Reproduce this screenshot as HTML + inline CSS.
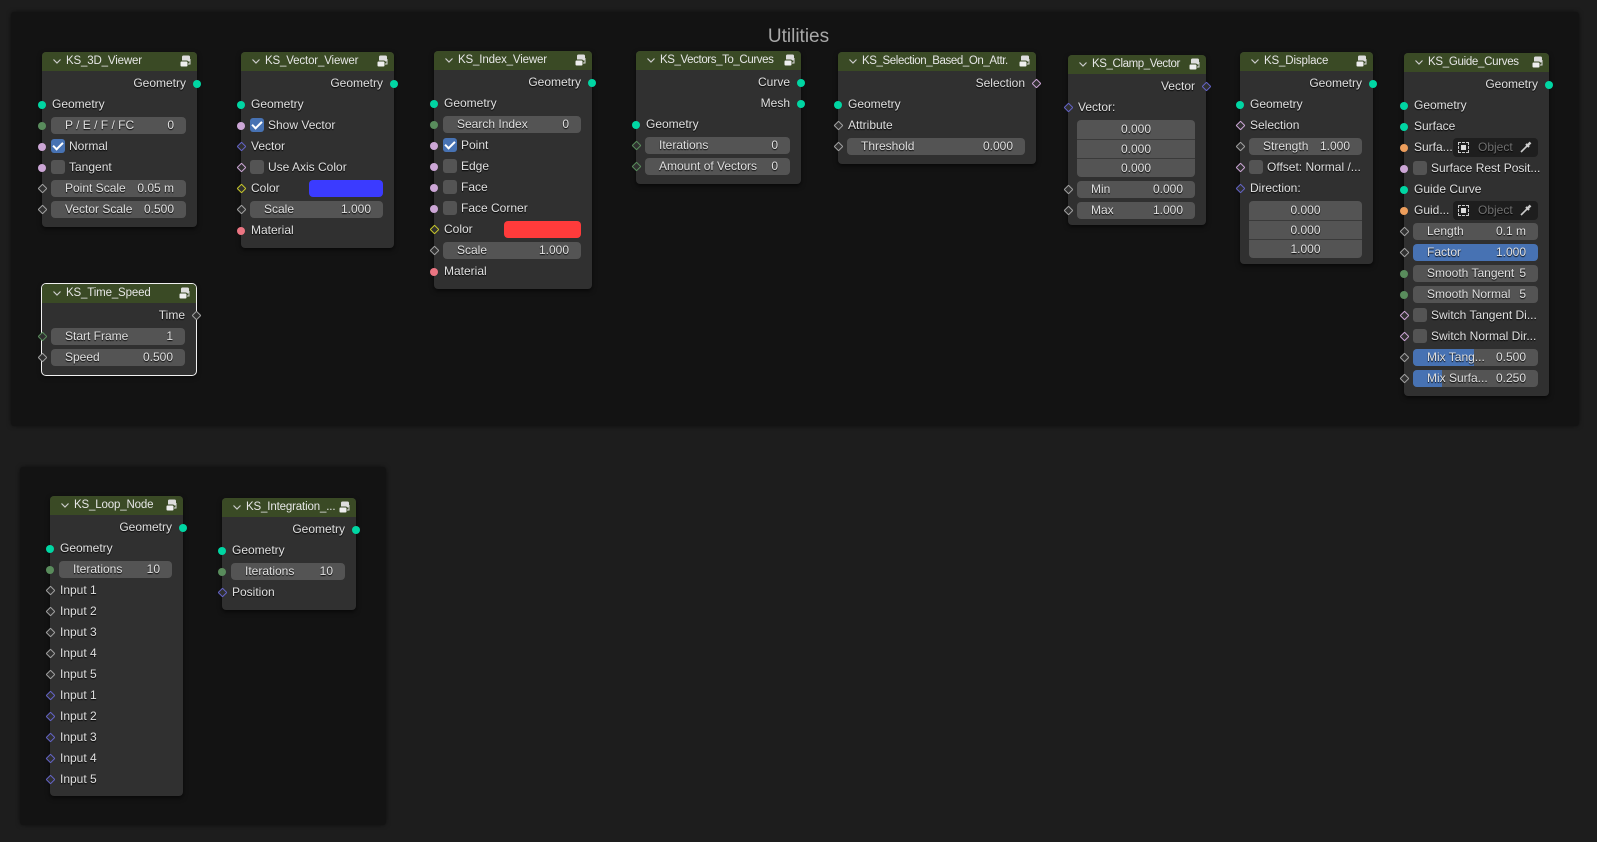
<!DOCTYPE html>
<html><head><meta charset="utf-8"><style>
*{box-sizing:border-box;margin:0;padding:0}
body{width:1597px;height:842px;background:#1d1d1d;font-family:"Liberation Sans",sans-serif;overflow:hidden;position:relative}
.fr{position:absolute;background:#131313;border-radius:3px;box-shadow:0 0 4px rgba(0,0,0,.5)}
.ttl{position:absolute;left:0;width:1597px;top:26px;text-align:center;color:#a8a8a8;font-size:19px}
.n{position:absolute;background:#303030;border-radius:4px;box-shadow:0 2px 5px rgba(0,0,0,.6)}
.n.sel{outline:1.5px solid #f0f0f0}
.h{height:19px;background:#3a4a25;border-radius:4px 4px 0 0;color:#e6e6e6;font-size:11.5px;letter-spacing:-0.15px;line-height:19px;padding-left:24px;padding-right:19px;position:relative;white-space:nowrap;overflow:hidden}
.h .cv{position:absolute;left:11px;top:7px}
.h .ic{position:absolute;right:5px;top:3px}
.b{padding:2px 0 7px}
.r{height:21px;position:relative;line-height:21px;font-size:12px;color:#e0e0e0;white-space:nowrap;text-shadow:0 1px 1px #000}
.o{text-align:right;padding-right:11px}
.i{padding-left:10px}
.s{position:absolute;width:8px;height:8px;border-radius:50%;top:6.5px;left:-4px}
.R{left:auto;right:-4px}
.d{width:7px;height:7px;border-radius:1px;transform:rotate(45deg);top:7px;left:-3.5px;border:1.6px solid #a1a1a1;background:#303030}
.d.R{left:auto;right:-3.5px}
.f{position:absolute;left:9px;right:11px;top:2px;height:17px;background:#545454;border-radius:4px;line-height:17px;overflow:hidden}
.f .l{position:absolute;left:14px}
.f .v{position:absolute;right:12px}
.f .fill{position:absolute;left:0;top:0;bottom:0;background:#4772b3}
.c{position:absolute;left:9px;top:3px;width:14px;height:14px;background:#545454;border-radius:3px}
.c.on{background:#4772b3}
.c.on:after{content:"";position:absolute;left:4px;top:1px;width:4px;height:8px;border:solid #fff;border-width:0 2px 2px 0;transform:rotate(45deg)}
.cl{padding-left:27px}
.sw{position:absolute;top:2px;height:17px;border-radius:4px;right:11px}
.vb{position:relative;margin:2px 11px 2px 9px;background:#545454;border-radius:4px;overflow:hidden}
.vb div{height:19px;line-height:19px;text-align:center;font-size:12px;color:#e0e0e0;border-top:1px solid #3a3a3a;text-shadow:0 1px 1px #000}
.vb div:first-child{border-top:0}
.ob{position:absolute;top:1px;height:19px;right:11px;background:#1e1e1e;border-radius:4px;color:#707070;line-height:19px}
.ob .oi{position:absolute;left:5px;top:4px;width:11px;height:11px;border:1px dashed #ccc}
.ob .oi:after{content:"";position:absolute;left:2px;top:2px;width:5px;height:5px;background:#ddd}
.ob .ot{position:absolute;left:25px}
.ob .ep{position:absolute;right:6px;top:3px}
.G{background:#00d6a3}.I{background:#598c5c}.B{background:#cca6d6}.M{background:#eb7582}.O{background:#ed9e5c}
.dB{border-color:#cca6d6}.dV{border-color:#6363c7}.dI{border-color:#598c5c}.dC{border-color:#c7c729}
</style></head><body>
<svg width="0" height="0" style="position:absolute"><defs>
<symbol id="cv" viewBox="0 0 8 5"><polyline points="0.5,0.5 4,4 7.5,0.5" fill="none" stroke="#ccc" stroke-width="1.2"/></symbol>
<symbol id="ic" viewBox="0 0 13 13"><rect x="3" y="0.5" width="8" height="6" rx="1.5" fill="#ddd"/><rect x="1" y="6" width="8" height="6" rx="1.5" fill="#eee" stroke="#3a4a25" stroke-width="1"/><path d="M11 4 v5 h-2" fill="none" stroke="#ddd" stroke-width="1"/></symbol>
</defs></svg>

<div class="fr" style="left:11px;top:12px;width:1568px;height:414px"></div>
<div class="ttl">Utilities</div>
<div class="fr" style="left:20px;top:467px;width:366px;height:358px"></div>

<div class="n" style="left:42px;top:52px;width:155px">
<div class="h"><svg class="cv" width="8" height="5"><use href="#cv"/></svg>KS_3D_Viewer<svg class="ic" width="13" height="13"><use href="#ic"/></svg></div>
<div class="b">
<div class="r o">Geometry<span class="s R G"></span></div>
<div class="r i"><span class="s G"></span>Geometry</div>
<div class="r"><span class="s I"></span><div class="f"><span class="l">P / E / F / FC</span><span class="v">0</span></div></div>
<div class="r cl"><span class="s B"></span><span class="c on"></span>Normal</div>
<div class="r cl"><span class="s B"></span><span class="c"></span>Tangent</div>
<div class="r"><span class="s d"></span><div class="f"><span class="l">Point Scale</span><span class="v">0.05 m</span></div></div>
<div class="r"><span class="s d"></span><div class="f"><span class="l">Vector Scale</span><span class="v">0.500</span></div></div>
</div></div>

<div class="n" style="left:241px;top:52px;width:153px">
<div class="h"><svg class="cv" width="8" height="5"><use href="#cv"/></svg>KS_Vector_Viewer<svg class="ic" width="13" height="13"><use href="#ic"/></svg></div>
<div class="b">
<div class="r o">Geometry<span class="s R G"></span></div>
<div class="r i"><span class="s G"></span>Geometry</div>
<div class="r cl"><span class="s B"></span><span class="c on"></span>Show Vector</div>
<div class="r i"><span class="s d dV"></span>Vector</div>
<div class="r cl"><span class="s d dB"></span><span class="c"></span>Use Axis Color</div>
<div class="r i"><span class="s d dC"></span>Color<span class="sw" style="left:68px;background:#3b3bff"></span></div>
<div class="r"><span class="s d"></span><div class="f"><span class="l">Scale</span><span class="v">1.000</span></div></div>
<div class="r i"><span class="s M"></span>Material</div>
</div></div>

<div class="n" style="left:434px;top:51px;width:158px">
<div class="h"><svg class="cv" width="8" height="5"><use href="#cv"/></svg>KS_Index_Viewer<svg class="ic" width="13" height="13"><use href="#ic"/></svg></div>
<div class="b">
<div class="r o">Geometry<span class="s R G"></span></div>
<div class="r i"><span class="s G"></span>Geometry</div>
<div class="r"><span class="s I"></span><div class="f"><span class="l">Search Index</span><span class="v">0</span></div></div>
<div class="r cl"><span class="s B"></span><span class="c on"></span>Point</div>
<div class="r cl"><span class="s B"></span><span class="c"></span>Edge</div>
<div class="r cl"><span class="s B"></span><span class="c"></span>Face</div>
<div class="r cl"><span class="s B"></span><span class="c"></span>Face Corner</div>
<div class="r i"><span class="s d dC"></span>Color<span class="sw" style="left:70px;background:#ff3b3b"></span></div>
<div class="r"><span class="s d"></span><div class="f"><span class="l">Scale</span><span class="v">1.000</span></div></div>
<div class="r i"><span class="s M"></span>Material</div>
</div></div>

<div class="n" style="left:636px;top:51px;width:165px">
<div class="h" style="letter-spacing:-0.4px"><svg class="cv" width="8" height="5"><use href="#cv"/></svg>KS_Vectors_To_Curves<svg class="ic" width="13" height="13"><use href="#ic"/></svg></div>
<div class="b">
<div class="r o">Curve<span class="s R G"></span></div>
<div class="r o">Mesh<span class="s R G"></span></div>
<div class="r i"><span class="s G"></span>Geometry</div>
<div class="r"><span class="s d dI"></span><div class="f"><span class="l">Iterations</span><span class="v">0</span></div></div>
<div class="r"><span class="s d dI"></span><div class="f"><span class="l">Amount of Vectors</span><span class="v">0</span></div></div>
</div></div>

<div class="n" style="left:838px;top:52px;width:198px">
<div class="h" style="letter-spacing:-0.4px"><svg class="cv" width="8" height="5"><use href="#cv"/></svg>KS_Selection_Based_On_Attr.<svg class="ic" width="13" height="13"><use href="#ic"/></svg></div>
<div class="b">
<div class="r o">Selection<span class="s d R dB"></span></div>
<div class="r i"><span class="s G"></span>Geometry</div>
<div class="r i"><span class="s d"></span>Attribute</div>
<div class="r"><span class="s d"></span><div class="f"><span class="l">Threshold</span><span class="v">0.000</span></div></div>
</div></div>

<div class="n" style="left:1068px;top:55px;width:138px">
<div class="h" style="letter-spacing:-0.4px"><svg class="cv" width="8" height="5"><use href="#cv"/></svg>KS_Clamp_Vector<svg class="ic" width="13" height="13"><use href="#ic"/></svg></div>
<div class="b" style="padding-bottom:4px">
<div class="r o">Vector<span class="s d R dV"></span></div>
<div class="r i"><span class="s d dV"></span>Vector:</div>
<div class="vb"><div>0.000</div><div>0.000</div><div>0.000</div></div>
<div class="r"><span class="s d"></span><div class="f"><span class="l">Min</span><span class="v">0.000</span></div></div>
<div class="r"><span class="s d"></span><div class="f"><span class="l">Max</span><span class="v">1.000</span></div></div>
</div></div>

<div class="n" style="left:1240px;top:52px;width:133px">
<div class="h"><svg class="cv" width="8" height="5"><use href="#cv"/></svg>KS_Displace<svg class="ic" width="13" height="13"><use href="#ic"/></svg></div>
<div class="b" style="padding-bottom:4px">
<div class="r o">Geometry<span class="s R G"></span></div>
<div class="r i"><span class="s G"></span>Geometry</div>
<div class="r i"><span class="s d dB"></span>Selection</div>
<div class="r"><span class="s d"></span><div class="f"><span class="l">Strength</span><span class="v">1.000</span></div></div>
<div class="r cl"><span class="s d dB"></span><span class="c"></span>Offset: Normal /...</div>
<div class="r i"><span class="s d dV"></span>Direction:</div>
<div class="vb"><div>0.000</div><div>0.000</div><div>1.000</div></div>
</div></div>

<div class="n" style="left:1404px;top:53px;width:145px">
<div class="h" style="letter-spacing:-0.3px"><svg class="cv" width="8" height="5"><use href="#cv"/></svg>KS_Guide_Curves<svg class="ic" width="13" height="13"><use href="#ic"/></svg></div>
<div class="b">
<div class="r o">Geometry<span class="s R G"></span></div>
<div class="r i"><span class="s G"></span>Geometry</div>
<div class="r i"><span class="s G"></span>Surface</div>
<div class="r i"><span class="s O"></span>Surfa...<span class="ob" style="left:49px"><span class="oi"></span><span class="ot">Object</span><svg class="ep" width="12" height="12" viewBox="0 0 12 12"><path d="M1 11 L7 5" stroke="#ccc" stroke-width="1.6"/><path d="M6 3 L9 6" stroke="#ccc" stroke-width="2"/><path d="M8 4 L10.5 1.5" stroke="#ccc" stroke-width="2.5"/></svg></span></div>
<div class="r cl"><span class="s B"></span><span class="c"></span>Surface Rest Posit...</div>
<div class="r i"><span class="s G"></span>Guide Curve</div>
<div class="r i"><span class="s O"></span>Guid...<span class="ob" style="left:49px"><span class="oi"></span><span class="ot">Object</span><svg class="ep" width="12" height="12" viewBox="0 0 12 12"><path d="M1 11 L7 5" stroke="#ccc" stroke-width="1.6"/><path d="M6 3 L9 6" stroke="#ccc" stroke-width="2"/><path d="M8 4 L10.5 1.5" stroke="#ccc" stroke-width="2.5"/></svg></span></div>
<div class="r"><span class="s d"></span><div class="f"><span class="l">Length</span><span class="v">0.1 m</span></div></div>
<div class="r"><span class="s d"></span><div class="f" style="background:#4772b3"><span class="l">Factor</span><span class="v">1.000</span></div></div>
<div class="r"><span class="s I"></span><div class="f"><span class="l">Smooth Tangent</span><span class="v">5</span></div></div>
<div class="r"><span class="s I"></span><div class="f"><span class="l">Smooth Normal</span><span class="v">5</span></div></div>
<div class="r cl"><span class="s d dB"></span><span class="c"></span>Switch Tangent Di...</div>
<div class="r cl"><span class="s d dB"></span><span class="c"></span>Switch Normal Dir...</div>
<div class="r"><span class="s d"></span><div class="f"><span class="fill" style="width:61px"></span><span class="l">Mix Tang...</span><span class="v">0.500</span></div></div>
<div class="r"><span class="s d"></span><div class="f"><span class="fill" style="width:29px"></span><span class="l">Mix Surfa...</span><span class="v">0.250</span></div></div>
</div></div>

<div class="n sel" style="left:42px;top:284px;width:154px">
<div class="h"><svg class="cv" width="8" height="5"><use href="#cv"/></svg>KS_Time_Speed<svg class="ic" width="13" height="13"><use href="#ic"/></svg></div>
<div class="b">
<div class="r o">Time<span class="s d R"></span></div>
<div class="r"><span class="s d dI"></span><div class="f"><span class="l">Start Frame</span><span class="v">1</span></div></div>
<div class="r"><span class="s d"></span><div class="f"><span class="l">Speed</span><span class="v">0.500</span></div></div>
</div></div>

<div class="n" style="left:50px;top:496px;width:133px">
<div class="h"><svg class="cv" width="8" height="5"><use href="#cv"/></svg>KS_Loop_Node<svg class="ic" width="13" height="13"><use href="#ic"/></svg></div>
<div class="b" style="padding-bottom:6px">
<div class="r o">Geometry<span class="s R G"></span></div>
<div class="r i"><span class="s G"></span>Geometry</div>
<div class="r"><span class="s I"></span><div class="f"><span class="l">Iterations</span><span class="v">10</span></div></div>
<div class="r i"><span class="s d"></span>Input 1</div>
<div class="r i"><span class="s d"></span>Input 2</div>
<div class="r i"><span class="s d"></span>Input 3</div>
<div class="r i"><span class="s d"></span>Input 4</div>
<div class="r i"><span class="s d"></span>Input 5</div>
<div class="r i"><span class="s d dV"></span>Input 1</div>
<div class="r i"><span class="s d dV"></span>Input 2</div>
<div class="r i"><span class="s d dV"></span>Input 3</div>
<div class="r i"><span class="s d dV"></span>Input 4</div>
<div class="r i"><span class="s d dV"></span>Input 5</div>
</div></div>

<div class="n" style="left:222px;top:498px;width:134px">
<div class="h"><svg class="cv" width="8" height="5"><use href="#cv"/></svg>KS_Integration_...<svg class="ic" width="13" height="13"><use href="#ic"/></svg></div>
<div class="b">
<div class="r o">Geometry<span class="s R G"></span></div>
<div class="r i"><span class="s G"></span>Geometry</div>
<div class="r"><span class="s I"></span><div class="f"><span class="l">Iterations</span><span class="v">10</span></div></div>
<div class="r i"><span class="s d dV"></span>Position</div>
</div></div>
</body></html>
